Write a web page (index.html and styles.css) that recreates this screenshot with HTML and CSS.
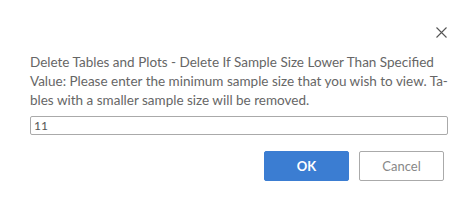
FILE: index.html
```html
<!DOCTYPE html>
<html lang="en">

<head>
    <meta charset="UTF-8">
    <title>Delete Tables and Plots</title>
    <link rel="stylesheet" href="styles.css">
</head>

<body>
    <div class="dialog">
        <div class="dialog-header">
            <button class="close" aria-label="Close">
                <svg width="11" height="11" viewBox="0 0 11 11">
                    <path d="M0.5 0.5 L10.5 10.5 M10.5 0.5 L0.5 10.5" stroke="#555" stroke-width="1.1" fill="none" />
                </svg>
            </button>
        </div>

        <p class="message">Delete Tables and Plots - Delete If Sample Size Lower Than Specified Value: Please enter the minimum sample size that you wish to view. Ta&shy;bles with a smaller sample size will be removed.</p>

        <input type="text" class="value" value="11">

        <div class="dialog-footer">
            <button class="btn primary">OK</button>
            <button class="btn">Cancel</button>
        </div>
    </div>
</body>

</html>
```

FILE: styles.css
```css
body {
    margin: 0;
    background-color: #fff;
    font-family: Lato, sans-serif;
    color: #666;
}

.dialog {
    width: 474px;
    height: 206px;
    box-sizing: border-box;
    padding: 27px 26px 0 30px;
}

.dialog-header {
    display: flex;
    justify-content: flex-end;
    height: 22px;
    padding-right: 1px;
}

.close {
    background: none;
    border: none;
    padding: 0;
    margin: 0;
    width: 11px;
    height: 11px;
    cursor: pointer;
    line-height: 0;
}

.message {
    margin: 0;
    font-size: 13.5px;
    line-height: 19px;
    hyphens: manual;
    padding-top: 4px;
}

.value {
    display: block;
    width: 100%;
    height: 19px;
    box-sizing: border-box;
    margin-top: 6px;
    padding: 0 3px;
    border: 1px solid #aaa;
    border-radius: 2px;
    font-family: Lato, sans-serif;
    font-size: 12px;
    color: #555;
}

.dialog-footer {
    display: flex;
    justify-content: flex-end;
    gap: 10px;
    margin-top: 16px;
    padding-right: 4px;
}

.btn {
    width: 85px;
    height: 30px;
    border: 1px solid #aaa;
    border-radius: 2px;
    background-color: #fff;
    color: #888;
    font-family: Lato, sans-serif;
    font-size: 13px;
    cursor: pointer;
}

.btn.primary {
    background-color: #3b7dd2;
    border-color: #3b7dd2;
    color: #fff;
    font-weight: bold;
}
```
